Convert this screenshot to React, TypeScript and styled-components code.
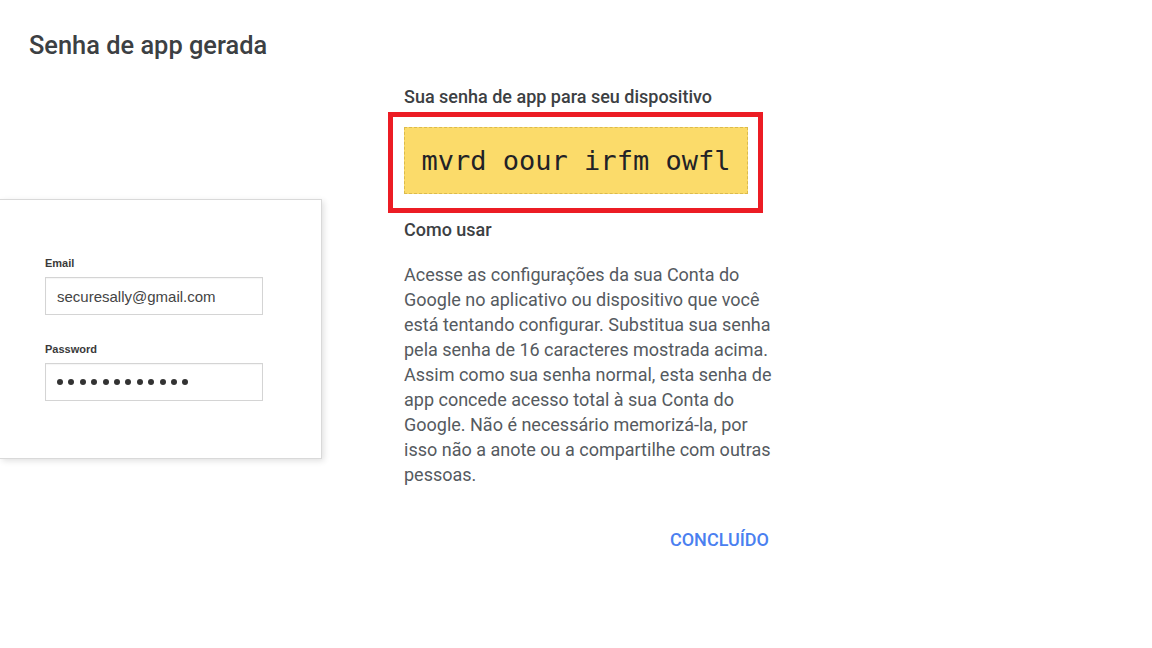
import React from "react";
import styled, { createGlobalStyle } from "styled-components";

const GlobalStyle = createGlobalStyle`
  html, body { margin: 0; padding: 0; background: #ffffff; }
  body { font-family: Roboto, "Noto Sans", Arial, sans-serif; }
  * { box-sizing: border-box; }
`;

const Page = styled.div`
  width: 1152px;
  height: 648px;
  padding-top: 29px;
  overflow: hidden;
  background: #fff;
`;

const Title = styled.h1`
  margin: 0;
  padding-left: 29px;
  font-size: 25.4px;
  line-height: 32px;
  font-weight: 500;
  color: #3c4043;
`;

const Body = styled.div`
  display: flex;
  align-items: flex-start;
  gap: 82px;
  margin-top: 24px;
`;

const Card = styled.div`
  width: 322px;
  height: 260px;
  margin-top: 114px;
  border: 1px solid #d9d9d9;
  border-left: none;
  box-shadow: 2px 2px 6px rgba(0, 0, 0, 0.12);
  background: #fff;
  padding: 56px 0 0 45px;
  display: flex;
  flex-direction: column;
  font-family: "Liberation Sans", Arial, sans-serif;
`;

const FieldLabel = styled.div<{ $first?: boolean }>`
  font-size: 11px;
  line-height: 14px;
  font-weight: 700;
  color: #3a3a3a;
  margin-top: ${(p) => (p.$first ? "0" : "27px")};
`;

const Field = styled.div`
  width: 218px;
  height: 38px;
  margin-top: 7px;
  border: 1px solid #d4d4d4;
  box-shadow: inset 0 1px 1px rgba(0, 0, 0, 0.04);
  padding-left: 11px;
  display: flex;
  align-items: center;
  font-size: 15px;
  color: #444;
`;

const Dots = styled.div`
  display: flex;
  gap: 5.4px;
`;

const Dot = styled.span`
  width: 6px;
  height: 6px;
  border-radius: 50%;
  background: #333;
`;

const Column = styled.div`
  width: 368px;
  display: flex;
  flex-direction: column;
`;

const Heading = styled.h2<{ $gap?: number }>`
  margin: ${(p) => p.$gap ?? 0}px 0 0 0;
  font-size: 18px;
  line-height: 24px;
  font-weight: 500;
  color: #3c4043;
`;

const Highlight = styled.div`
  width: 375px;
  margin: 3px 0 0 -16px;
  border: 5px solid #ec1c24;
  padding: 10px 10px 14px 11px;
`;

const PasswordBox = styled.div`
  width: 344px;
  height: 67px;
  background: #fbdb6a;
  border: 1px dashed #dcbb4c;
  display: flex;
  align-items: center;
  justify-content: center;
  font-family: "DejaVu Sans Mono", "Liberation Mono", monospace;
  font-size: 27px;
  color: #222226;
`;

const Paragraph = styled.p`
  margin: 20px 0 0 0;
  font-size: 18px;
  line-height: 25px;
  color: #555a60;
`;

const Footer = styled.div`
  display: flex;
  justify-content: flex-end;
  margin-top: 41px;
  padding-right: 3px;
`;

const DoneButton = styled.button`
  border: none;
  background: none;
  padding: 0;
  margin: 0;
  font-family: Roboto, Arial, sans-serif;
  font-size: 18px;
  line-height: 24px;
  font-weight: 500;
  color: #4a80f0;
  cursor: pointer;
`;

export default function App() {
  return (
    <Page>
      <GlobalStyle />
      <Title>Senha de app gerada</Title>
      <Body>
        <Card>
          <FieldLabel $first>Email</FieldLabel>
          <Field>securesally@gmail.com</Field>
          <FieldLabel>Password</FieldLabel>
          <Field>
            <Dots>
              {Array.from({ length: 12 }).map((_, i) => (
                <Dot key={i} />
              ))}
            </Dots>
          </Field>
        </Card>
        <Column>
          <Heading>Sua senha de app para seu dispositivo</Heading>
          <Highlight>
            <PasswordBox>mvrd oour irfm owfl</PasswordBox>
          </Highlight>
          <Heading $gap={5}>Como usar</Heading>
          <Paragraph>
            Acesse as configurações da sua Conta do Google no aplicativo ou
            dispositivo que você está tentando configurar. Substitua sua senha
            pela senha de 16 caracteres mostrada acima. Assim como sua senha
            normal, esta senha de app concede acesso total à sua Conta do
            Google. Não é necessário memorizá-la, por isso não a anote ou a
            compartilhe com outras pessoas.
          </Paragraph>
          <Footer>
            <DoneButton>CONCLUÍDO</DoneButton>
          </Footer>
        </Column>
      </Body>
    </Page>
  );
}
